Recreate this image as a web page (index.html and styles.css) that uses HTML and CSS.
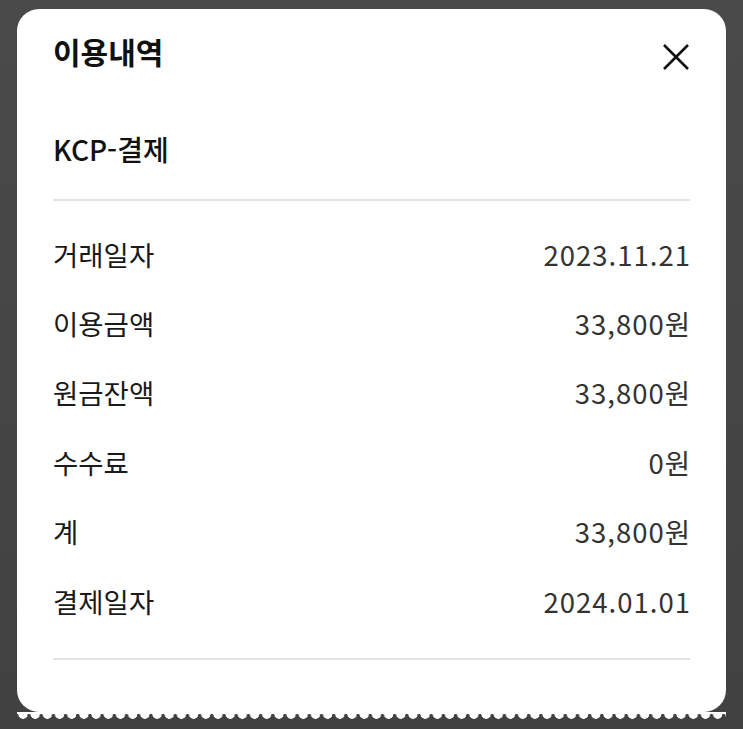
FILE: index.html
```html
<!DOCTYPE html>
<html lang="ko">
<head>
    <meta charset="UTF-8">
    <meta name="viewport" content="width=device-width, initial-scale=1.0">
    <title>이용내역</title>
    <link rel="stylesheet" href="styles.css">
</head>
<body>

    <div class="sheet">
        <div class="modal">
            <div class="modal-head">
                <h1 class="modal-title">이용내역</h1>
                <button class="btn-close" aria-label="닫기">
                    <svg width="30" height="30" viewBox="0 0 30 30">
                        <path d="M3 3 L27 27 M27 3 L3 27" stroke="#111" stroke-width="2.6" fill="none"/>
                    </svg>
                </button>
            </div>

            <div class="merchant">KCP-결제</div>

            <!-- 거래 상세 -->
            <ul class="detail">
                <li class="row"><span class="label">거래일자</span><span class="value">2023.11.21</span></li>
                <li class="row"><span class="label">이용금액</span><span class="value">33,800원</span></li>
                <li class="row"><span class="label">원금잔액</span><span class="value">33,800원</span></li>
                <li class="row"><span class="label">수수료</span><span class="value">0원</span></li>
                <li class="row"><span class="label">계</span><span class="value">33,800원</span></li>
                <li class="row"><span class="label">결제일자</span><span class="value">2024.01.01</span></li>
            </ul>
        </div>
        <div class="receipt-edge"></div>
    </div>

</body>
</html>
```

FILE: styles.css
```css
html, body {
    margin: 0;
    height: 100%;
}
body {
    background: linear-gradient(#4a4a4a, #414141);
    font-family: "Noto Sans CJK KR", "Noto Sans", sans-serif;
    color: #222;
    padding: 9px 0 0 17px;
    box-sizing: border-box;
    overflow: hidden;
}
.sheet {
    width: 709px;
}
.modal {
    background: #fff;
    border-radius: 22px;
    padding: 0 36px;
    height: 703px;
    box-sizing: border-box;
}
.modal-head {
    display: flex;
    justify-content: space-between;
    align-items: flex-start;
    padding-top: 22px;
}
.modal-title {
    margin: 0;
    font-size: 30px;
    font-weight: 700;
    color: #111;
    line-height: 40px;
}
.btn-close {
    border: 0;
    background: none;
    padding: 0;
    margin: 11px -1px 0 0;
    width: 30px;
    height: 30px;
}
.merchant {
    margin-top: 59px;
    font-size: 28px;
    font-weight: 500;
    color: #111;
    line-height: 36px;
    padding-bottom: 32px;
    border-bottom: 2px solid #e2e2e2;
}
.detail {
    list-style: none;
    margin: 0;
    padding: 18px 0 23px;
    border-bottom: 2px solid #e2e2e2;
}
.row {
    display: flex;
    justify-content: space-between;
    align-items: center;
    height: 69.4px;
    font-size: 27.5px;
}
.label {
    color: #1a1a1a;
}
.value {
    color: #333;
    letter-spacing: 1px;
    margin-right: -1px;
}
/* 영수증 톱니 모양 하단 */
.receipt-edge {
    height: 8px;
    border-top: 2px solid #fff;
    background: radial-gradient(circle at 6px 0, #fff 4.5px, transparent 5px) 0 0 / 12.2px 8px repeat-x;
}
```
